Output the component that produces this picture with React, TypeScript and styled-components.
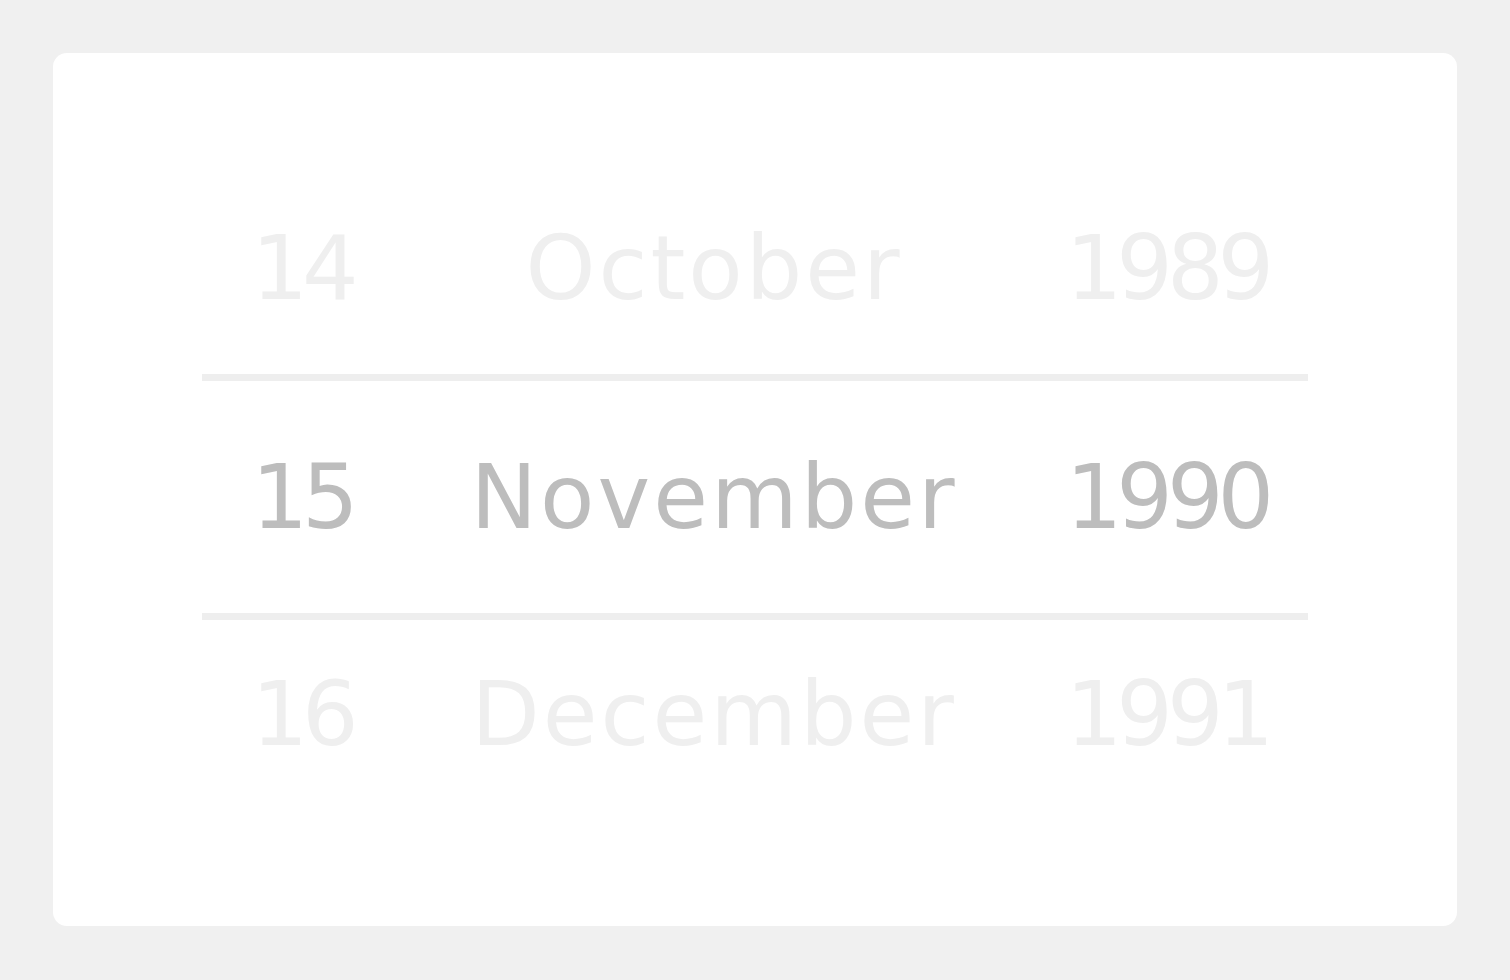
import React from "react";
import styled, { createGlobalStyle } from "styled-components";

const GlobalStyle = createGlobalStyle`
  html, body {
    margin: 0;
    padding: 0;
    background: #f0f0f0;
  }
  body {
    font-family: "DejaVu Sans", "Liberation Sans", sans-serif;
  }
`;

const Page = styled.div`
  width: 1510px;
  height: 980px;
  padding: 53px;
  box-sizing: border-box;
`;

const Card = styled.div`
  height: 873px;
  background: #ffffff;
  border-radius: 14px;
  padding: 109px 149px 0;
  box-sizing: border-box;
  display: flex;
  flex-direction: column;
`;

const Row = styled.div<{ $height: number }>`
  height: ${(p) => p.$height}px;
  display: grid;
  grid-template-columns: 200px 1fr 282px;
  align-items: center;
`;

const Divider = styled.div`
  height: 7px;
  background: #eeeeee;
`;

const Cell = styled.div<{ $active?: boolean; $numeric?: boolean }>`
  text-align: center;
  font-size: 89px;
  line-height: 1;
  color: ${(p) => (p.$active ? "#bdbdbd" : "#efefef")};
  letter-spacing: ${(p) => (p.$numeric ? "-6px" : "3px")};
  white-space: nowrap;
`;

type Entry = { day: string; month: string; year: string };

const entries: Entry[] = [
  { day: "14", month: "October", year: "1989" },
  { day: "15", month: "November", year: "1990" },
  { day: "16", month: "December", year: "1991" },
];

const rowHeights = [212, 232, 188];

export default function App() {
  return (
    <>
      <GlobalStyle />
      <Page>
        <Card>
          {entries.map((e, i) => {
            const active = i === 1;
            return (
              <React.Fragment key={e.day}>
                {i > 0 && <Divider />}
                <Row $height={rowHeights[i]}>
                  <Cell $active={active} $numeric>
                    {e.day}
                  </Cell>
                  <Cell $active={active}>{e.month}</Cell>
                  <Cell $active={active} $numeric>
                    {e.year}
                  </Cell>
                </Row>
              </React.Fragment>
            );
          })}
        </Card>
      </Page>
    </>
  );
}
